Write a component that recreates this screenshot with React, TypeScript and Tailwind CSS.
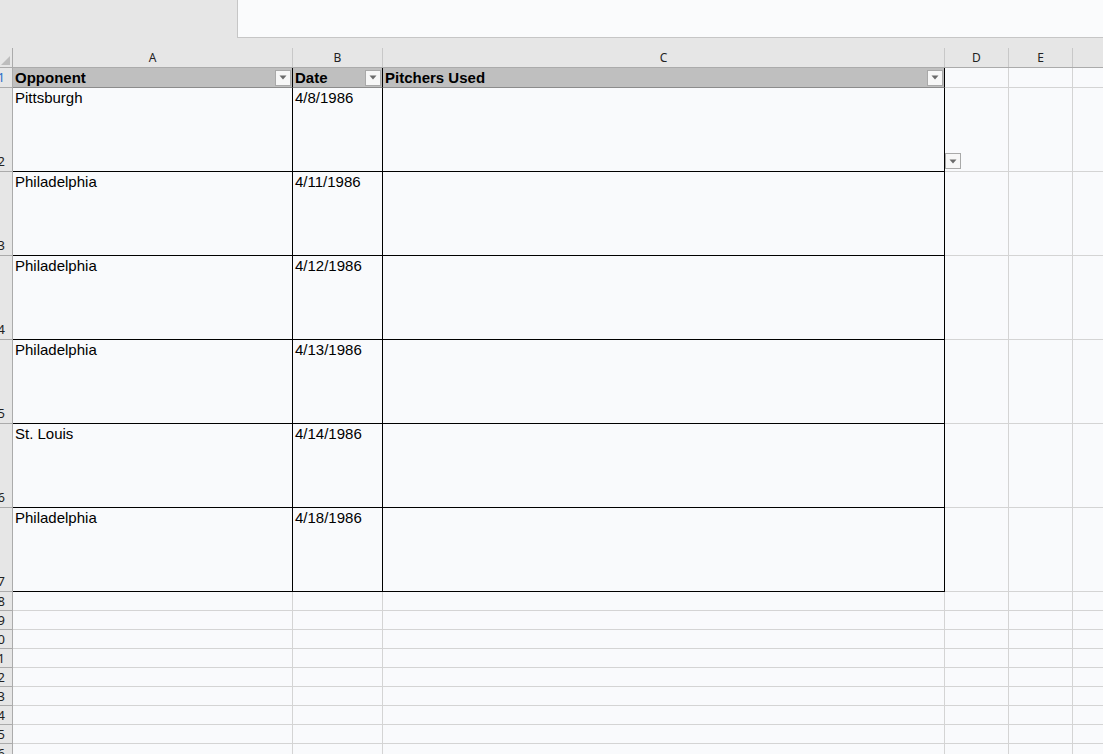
import React from "react";

const COLS = [
  { key: "A", w: 280 },
  { key: "B", w: 90 },
  { key: "C", w: 562 },
  { key: "D", w: 64 },
  { key: "E", w: 64 },
  { key: "F", w: 100 },
];

const data = [
  ["Pittsburgh", "4/8/1986"],
  ["Philadelphia", "4/11/1986"],
  ["Philadelphia", "4/12/1986"],
  ["Philadelphia", "4/13/1986"],
  ["St. Louis", "4/14/1986"],
  ["Philadelphia", "4/18/1986"],
];

function FilterBtn() {
  return (
    <div className="w-[16px] h-[16px] bg-[#f7f7f7] border border-[#a9a9a9] flex items-center justify-center">
      <svg width="8" height="5" viewBox="0 0 8 5">
        <path d="M0.5 0.5 L7.5 0.5 L4 4.5 Z" fill="#6b6b6b" />
      </svg>
    </div>
  );
}

function RowHeader({ n, h, blue, bottom }: { n: number; h: number; blue?: boolean; bottom?: boolean }) {
  return (
    <div
      className={`w-[13px] shrink-0 bg-[#e6e6e6] border-r border-b border-[#ababab] overflow-hidden flex justify-end ${bottom ? "items-end pb-[2px]" : "items-center"}`}
      style={{ height: h }}
    >
      <span
        className={`text-[13px] leading-[15px] whitespace-nowrap pr-[7px] ${blue ? "text-[#2a6fc9]" : "text-[#222]"}`}
        style={{ fontFamily: '"Noto Sans", sans-serif' }}
      >
        {n}
      </span>
    </div>
  );
}

export default function App() {
  const cellFont = { fontFamily: '"Liberation Sans", Arial, sans-serif' };
  return (
    <div className="w-[1103px] h-[754px] overflow-hidden bg-[#f9fafc] select-none">
      {/* top band */}
      <div className="h-[48px] bg-[#e6e6e6] flex">
        <div className="w-[237px] shrink-0" />
        <div className="flex-1 h-[38px] bg-[#fafbfc] border-l border-b border-[#c6c6c6]" />
      </div>
      {/* column headers */}
      <div className="flex h-[20px] bg-[#e6e6e6] border-b border-[#ababab]">
        <div className="w-[13px] shrink-0 border-r border-[#ababab] relative overflow-hidden">
          <svg className="absolute right-[2px] bottom-[2px]" width="9" height="9" viewBox="0 0 9 9">
            <path d="M9 0 L9 9 L0 9 Z" fill="#bdbdbd" />
          </svg>
        </div>
        {COLS.map((c) => (
          <div
            key={c.key}
            className="shrink-0 border-r border-[#c8c8c8] flex items-center justify-center text-[12px] text-[#222]"
            style={{ width: c.w, fontFamily: '"Noto Sans", sans-serif' }}
          >
            {c.key === "F" ? "" : c.key}
          </div>
        ))}
      </div>
      {/* row 1 header */}
      <div className="flex h-[20px]">
        <RowHeader n={1} h={20} blue />
        {[
          { t: "Opponent", w: 280 },
          { t: "Date", w: 90 },
          { t: "Pitchers Used", w: 562 },
        ].map((c) => (
          <div
            key={c.t}
            className="shrink-0 bg-[#bfbfbf] border-r border-b border-r-black border-b-[#8c8c8c] flex items-center justify-between pl-[2px] pr-[1px]"
            style={{ width: c.w }}
          >
            <span className="text-[15px] font-bold text-black leading-[17px]" style={cellFont}>
              {c.t}
            </span>
            <FilterBtn />
          </div>
        ))}
        <div className="w-[64px] shrink-0 border-r border-b border-[#d4d4d4]" />
        <div className="w-[64px] shrink-0 border-r border-b border-[#d4d4d4]" />
        <div className="flex-1 border-b border-[#d4d4d4]" />
      </div>
      {/* data rows */}
      {data.map((r, i) => (
        <div key={i} className="flex h-[84px]">
          <RowHeader n={i + 2} h={84} bottom />
          <div className="w-[280px] shrink-0 border-r border-b border-black pl-[2px] pt-[3px]">
            <div className="text-[15px] leading-[14px] text-black" style={cellFont}>{r[0]}</div>
          </div>
          <div className="w-[90px] shrink-0 border-r border-b border-black pl-[2px] pt-[3px]">
            <div className="text-[15px] leading-[14px] text-black" style={cellFont}>{r[1]}</div>
          </div>
          <div className="w-[562px] shrink-0 border-r border-b border-black" />
          <div className="w-[64px] shrink-0 border-r border-b border-[#d4d4d4] relative">
            {i === 0 && (
              <div className="absolute left-0 top-[65px] w-[17px] h-[17px]">
                <FilterBtn />
              </div>
            )}
          </div>
          <div className="w-[64px] shrink-0 border-r border-b border-[#d4d4d4]" />
          <div className="flex-1 border-b border-[#d4d4d4]" />
        </div>
      ))}
      {/* empty rows */}
      {Array.from({ length: 9 }).map((_, i) => (
        <div key={i} className="flex h-[19px]">
          <RowHeader n={i + 8} h={19} />
          <div className="w-[280px] shrink-0 border-r border-b border-[#d4d4d4]" />
          <div className="w-[90px] shrink-0 border-r border-b border-[#d4d4d4]" />
          <div className="w-[562px] shrink-0 border-r border-b border-[#d4d4d4]" />
          <div className="w-[64px] shrink-0 border-r border-b border-[#d4d4d4]" />
          <div className="w-[64px] shrink-0 border-r border-b border-[#d4d4d4]" />
          <div className="flex-1 border-b border-[#d4d4d4]" />
        </div>
      ))}
    </div>
  );
}
